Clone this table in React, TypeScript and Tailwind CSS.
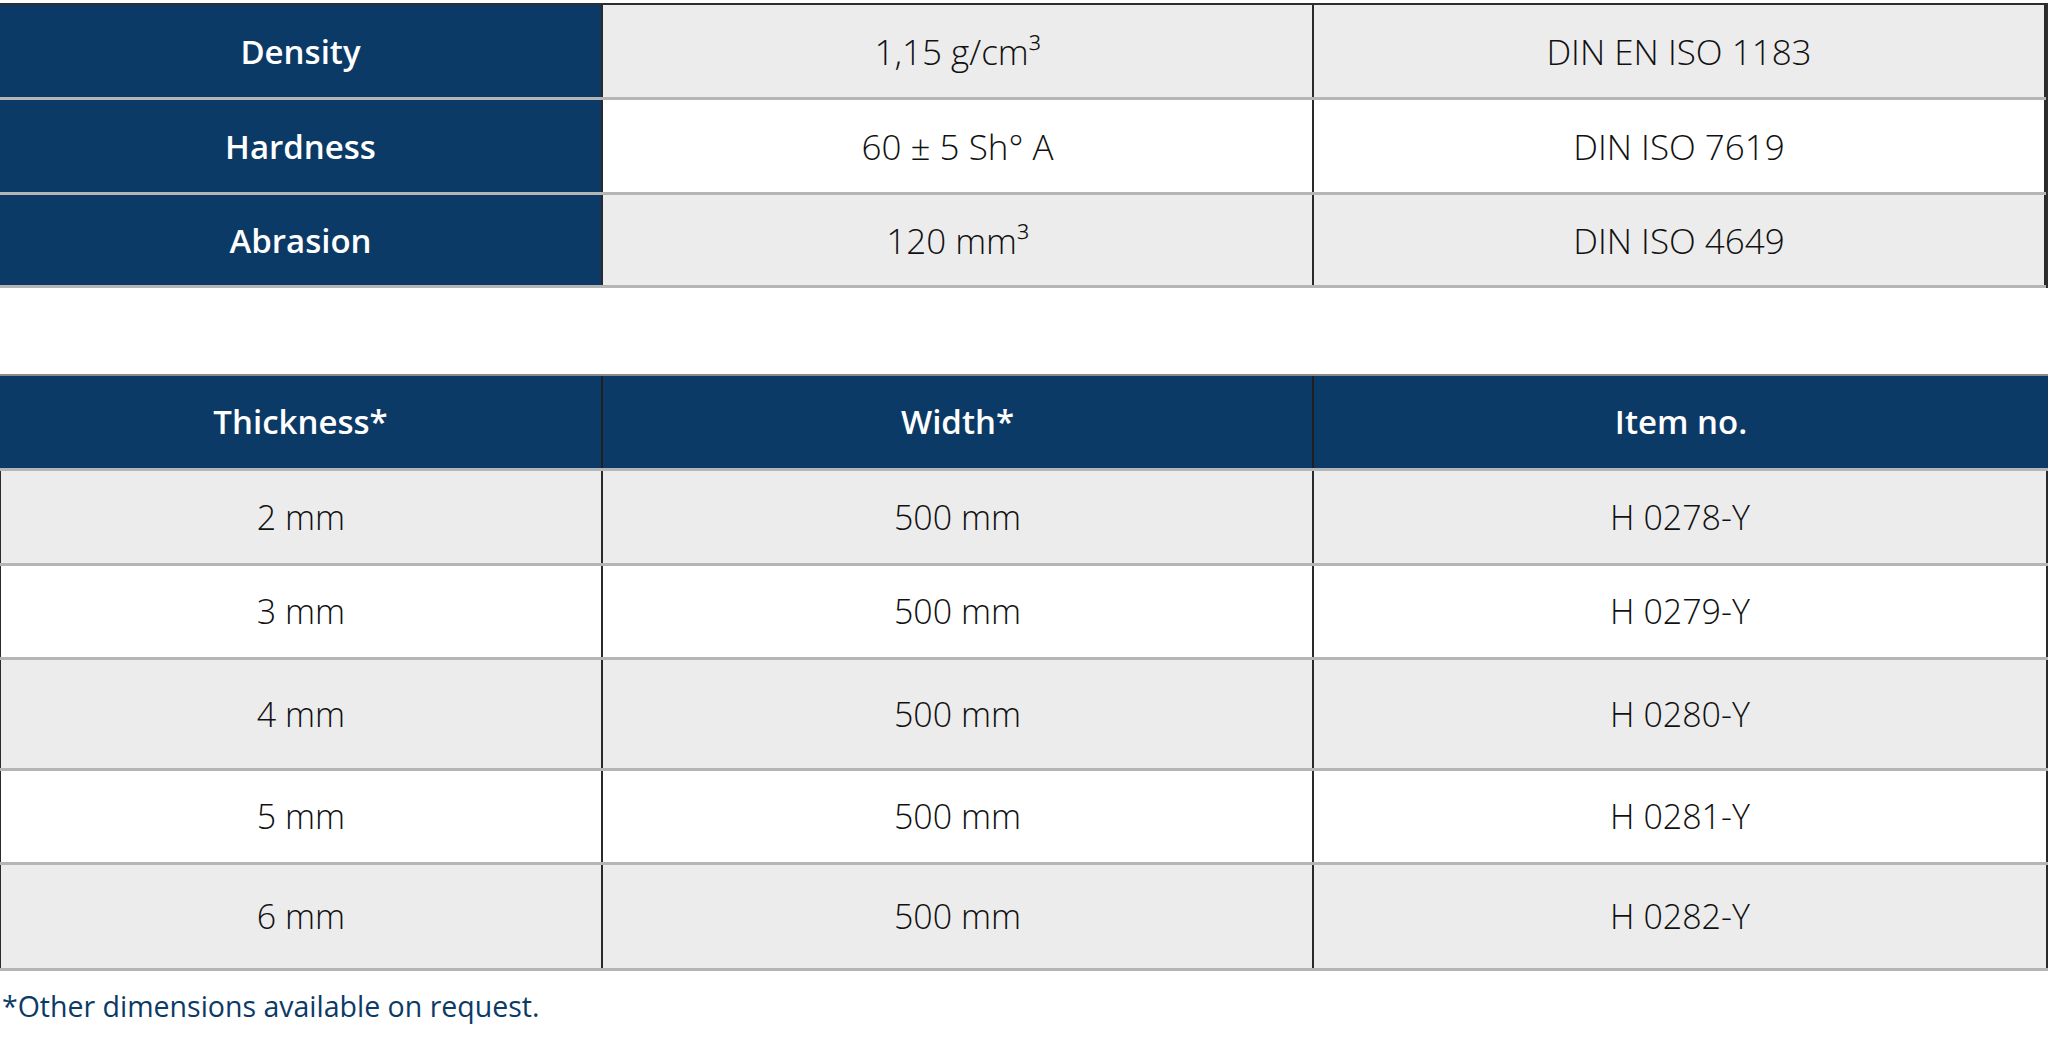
import React from "react";

const font = { fontFamily: '"Open Sans", "Noto Sans", sans-serif' };

type Row = { cells: [string, string, string]; h: string; bg: string };

const top: Row[] = [
  { cells: ["Density", "1,15 g/cm³", "DIN EN ISO 1183"], h: "h-[95px]", bg: "bg-[#ececec]" },
  { cells: ["Hardness", "60 ± 5 Sh° A", "DIN ISO 7619"], h: "h-[95px]", bg: "bg-white" },
  { cells: ["Abrasion", "120 mm³", "DIN ISO 4649"], h: "h-[93px]", bg: "bg-[#ececec]" },
];

const bottom: Row[] = [
  { cells: ["2 mm", "500 mm", "H 0278-Y"], h: "h-[95px]", bg: "bg-[#ececec]" },
  { cells: ["3 mm", "500 mm", "H 0279-Y"], h: "h-[94px]", bg: "bg-white" },
  { cells: ["4 mm", "500 mm", "H 0280-Y"], h: "h-[111px]", bg: "bg-[#ececec]" },
  { cells: ["5 mm", "500 mm", "H 0281-Y"], h: "h-[94px]", bg: "bg-white" },
  { cells: ["6 mm", "500 mm", "H 0282-Y"], h: "h-[106px]", bg: "bg-[#ececec]" },
];

function Cell({ children, className }: { children: React.ReactNode; className: string }) {
  return <div className={`flex items-center justify-center ${className}`}>{children}</div>;
}

export default function App() {
  return (
    <div className="w-[2048px] h-[1039px] bg-white overflow-hidden" style={font}>
      {/* Table 1 */}
      <div className="mt-[3px] border-t-2 border-[#2e2e2e] border-r-2">
        {top.map((r, i) => (
          <div key={i} className={`flex ${r.h} border-b-[3px] border-[#b5b5b5]`}>
            <Cell className="w-[601px] bg-[#0c3a66] text-white font-semibold text-[33px] pt-[2px]">{r.cells[0]}</Cell>
            <Cell className={`w-[711px] border-l-2 border-[#2a2a2a] ${r.bg} text-[#111] font-light text-[35px] pt-[2px]`}>
              {r.cells[1]}
            </Cell>
            <Cell className={`flex-1 border-l-2 border-[#2a2a2a] ${r.bg} text-[#111] font-light text-[35px] border-r-2 pt-[2px]`}>
              {r.cells[2]}
            </Cell>
          </div>
        ))}
      </div>

      {/* Table 2 */}
      <div className="mt-[86px] border-t-2 border-[#8a8a8a]">
        <div className="flex h-[95px] border-b-[3px] border-[#b5b5b5]">
          {["Thickness*", "Width*", "Item no."].map((t, i) => (
            <Cell
              key={t}
              className={`${i === 0 ? "w-[601px]" : i === 1 ? "w-[711px] border-l-2 border-[#1f1f1f]" : "flex-1 border-l-2 border-[#1f1f1f]"} bg-[#0c3a66] text-white font-semibold text-[33px]`}
            >
              {t}
            </Cell>
          ))}
        </div>
        {bottom.map((r, i) => (
          <div key={i} className={`flex ${r.h} border-b-[3px] border-[#b5b5b5]`}>
            <Cell className={`w-[601px] border-l border-[#2a2a2a] ${r.bg} text-[#111] font-light text-[34px]`}>
              {r.cells[0]}
            </Cell>
            <Cell className={`w-[711px] border-l-2 border-[#2a2a2a] ${r.bg} text-[#111] font-light text-[34px]`}>
              {r.cells[1]}
            </Cell>
            <Cell className={`flex-1 border-l-2 border-r-2 border-[#2a2a2a] ${r.bg} text-[#111] font-light text-[34px]`}>
              {r.cells[2]}
            </Cell>
          </div>
        ))}
      </div>

      <div className="mt-[21px] pl-[2px] text-[28.5px] text-[#0c3a66] leading-none">
        *Other dimensions available on request.
      </div>
    </div>
  );
}
